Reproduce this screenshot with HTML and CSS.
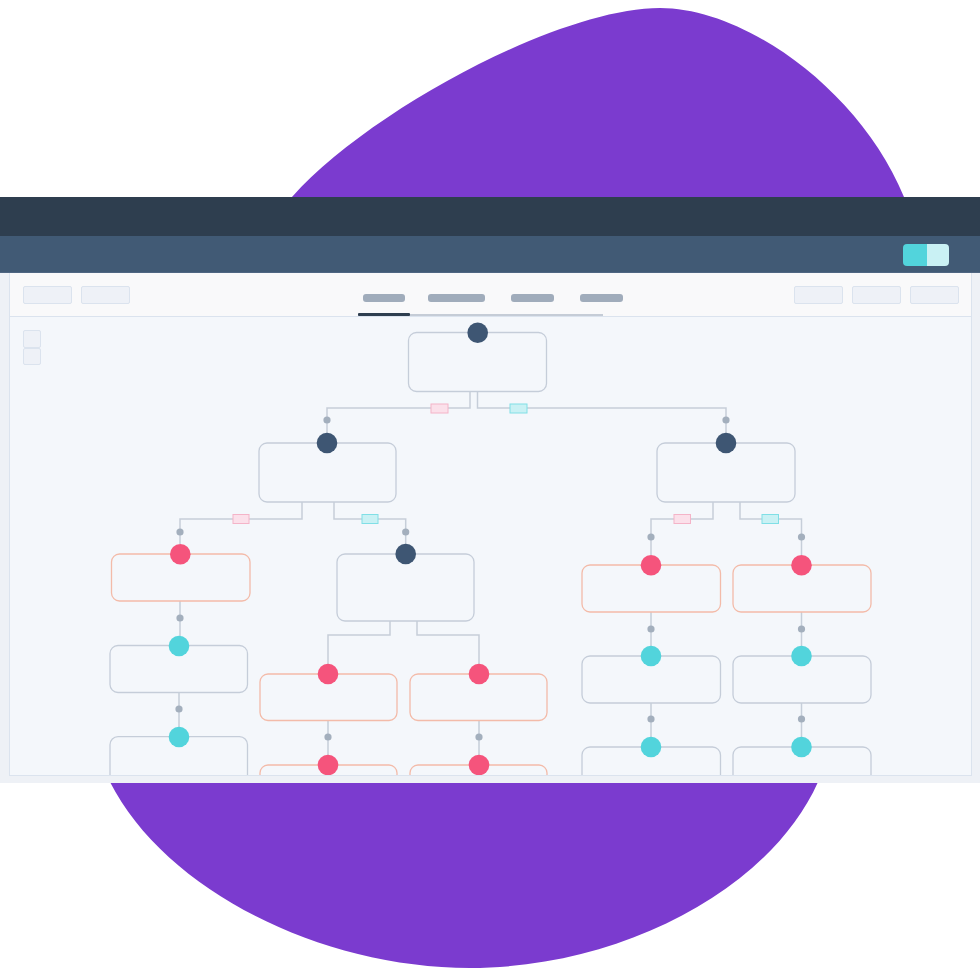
FILE: index.html
```html
<!DOCTYPE html>
<html lang="en">
<head>
    <meta charset="UTF-8">
    <meta name="viewport" content="width=device-width, initial-scale=1.0">
    <title>Flow builder</title>
    <link rel="stylesheet" href="styles.css">
</head>
<body>
    <div class="stage">
        <svg class="blob" width="980" height="980" viewBox="0 0 980 980">
            <path d="M660 8 C745 8 860 90 904 197 L965 430 C960 560 900 680 818 782 C770 890 620 968 470 968 C320 968 165 890 110 782 C60 620 120 400 292 197 C370 110 560 8 660 8 Z" />
        </svg>

        <div class="window">
            <div class="titlebar"></div>
            <div class="menubar">
                <div class="toggle"><span class="on"></span><span class="off"></span></div>
            </div>

            <div class="frame">
                <div class="panel">
                    <div class="toolbar">
                        <div class="btn-group">
                            <span class="btn"></span>
                            <span class="btn"></span>
                        </div>
                        <div class="tabs">
                            <div class="tab-row">
                                <span class="tab w42"></span>
                                <span class="tab w57"></span>
                                <span class="tab w43 wide-gap"></span>
                                <span class="tab w43 wide-gap"></span>
                            </div>
                            <div class="tab-track"><span class="tab-active"></span></div>
                        </div>
                        <div class="btn-group right">
                            <span class="btn"></span>
                            <span class="btn"></span>
                            <span class="btn"></span>
                        </div>
                    </div>

                    <div class="canvas">
                        <div class="zoom">
                            <span></span>
                            <span></span>
                        </div>

                        <svg class="diagram" width="961" height="458" viewBox="10 317 961 458">
                            <!-- connectors -->
                            <g class="links">
                                <path d="M470 392 V408 H327 V433" />
                                <path d="M477.5 392 V408 H726 V433" />
                                <path d="M302 502 V519 H180 V544" />
                                <path d="M334 502 V519 H405.7 V544" />
                                <path d="M713 502 V519 H651 V555" />
                                <path d="M740 502 V519 H801.5 V555" />
                                <path d="M180 601 V636" />
                                <path d="M179 692 V727" />
                                <path d="M390 621 V635 H328 V664" />
                                <path d="M417 621 V635 H479 V664" />
                                <path d="M328 720 V755" />
                                <path d="M479 720 V755" />
                                <path d="M651 612 V646" />
                                <path d="M801.5 612 V646" />
                                <path d="M651 703 V737" />
                                <path d="M801.5 703 V737" />
                            </g>
                            <g class="dots">
                                <circle cx="327" cy="420" r="3.6" />
                                <circle cx="726" cy="420" r="3.6" />
                                <circle cx="180" cy="532" r="3.6" />
                                <circle cx="405.7" cy="532" r="3.6" />
                                <circle cx="651" cy="537" r="3.6" />
                                <circle cx="801.5" cy="537" r="3.6" />
                                <circle cx="180" cy="618" r="3.6" />
                                <circle cx="179" cy="709" r="3.6" />
                                <circle cx="651" cy="629" r="3.6" />
                                <circle cx="801.5" cy="629" r="3.6" />
                                <circle cx="651" cy="719" r="3.6" />
                                <circle cx="801.5" cy="719" r="3.6" />
                                <circle cx="328" cy="737" r="3.6" />
                                <circle cx="479" cy="737" r="3.6" />
                            </g>
                            <g class="tag-no">
                                <rect x="431" y="404" width="17" height="9" />
                                <rect x="233" y="514.5" width="16" height="9" />
                                <rect x="674" y="514.5" width="16.5" height="9" />
                            </g>
                            <g class="tag-yes">
                                <rect x="510" y="404" width="17" height="9" />
                                <rect x="362" y="514.5" width="16" height="9" />
                                <rect x="762" y="514.5" width="16.5" height="9" />
                            </g>

                            <!-- nodes -->
                            <g class="box">
                                <rect x="408.5" y="332.5" width="138" height="59" rx="8" />
                                <rect x="259" y="443" width="137" height="59" rx="8" />
                                <rect x="657" y="443" width="138" height="59" rx="8" />
                                <rect x="337" y="554" width="137" height="67" rx="8" />
                                <rect x="110" y="645.5" width="137.5" height="47" rx="8" />
                                <rect x="110" y="736.7" width="137.5" height="60" rx="8" />
                                <rect x="582" y="656" width="138.5" height="47" rx="8" />
                                <rect x="733" y="656" width="138" height="47" rx="8" />
                                <rect x="582" y="747" width="138.5" height="60" rx="8" />
                                <rect x="733" y="747" width="138" height="60" rx="8" />
                            </g>
                            <g class="box alert">
                                <rect x="111.5" y="554" width="138.5" height="47" rx="8" />
                                <rect x="260" y="674" width="137" height="46.5" rx="8" />
                                <rect x="410" y="674" width="137" height="46.5" rx="8" />
                                <rect x="260" y="765" width="137" height="40" rx="8" />
                                <rect x="410" y="765" width="137" height="40" rx="8" />
                                <rect x="582" y="565" width="138.5" height="47" rx="8" />
                                <rect x="733" y="565" width="138" height="47" rx="8" />
                            </g>

                            <g class="pin dark">
                                <circle cx="477.7" cy="332.7" r="10.3" />
                                <circle cx="327" cy="443" r="10.3" />
                                <circle cx="726" cy="443" r="10.3" />
                                <circle cx="405.7" cy="554" r="10.3" />
                            </g>
                            <g class="pin red">
                                <circle cx="180.3" cy="554.3" r="10.3" />
                                <circle cx="328" cy="674" r="10.3" />
                                <circle cx="479" cy="674" r="10.3" />
                                <circle cx="328" cy="765" r="10.3" />
                                <circle cx="479" cy="765" r="10.3" />
                                <circle cx="651" cy="565.3" r="10.3" />
                                <circle cx="801.5" cy="565.3" r="10.3" />
                            </g>
                            <g class="pin teal">
                                <circle cx="179" cy="646" r="10.3" />
                                <circle cx="179" cy="737" r="10.3" />
                                <circle cx="651" cy="656" r="10.3" />
                                <circle cx="801.5" cy="656" r="10.3" />
                                <circle cx="651" cy="747" r="10.3" />
                                <circle cx="801.5" cy="747" r="10.3" />
                            </g>
                        </svg>
                    </div>
                </div>
            </div>
        </div>
    </div>
</body>
</html>
```

FILE: styles.css
```css
body {
    margin: 0;
    background: #ffffff;
    font-family: "Liberation Sans", Arial, sans-serif;
}
.stage {
    position: relative;
    width: 980px;
    height: 980px;
    overflow: hidden;
}
.blob {
    position: absolute;
    left: 0;
    top: 0;
}
.blob path {
    fill: #7b3bcf;
}
.window {
    position: relative;
    margin-top: 197px;
}
.titlebar {
    height: 39px;
    background: #2e3e4f;
}
.menubar {
    height: 36px;
    background: #415a75;
    border-bottom: 1px solid #4f6682;
    display: flex;
    align-items: flex-start;
    justify-content: flex-end;
    padding-right: 31px;
}
.toggle {
    display: flex;
    margin-top: 8px;
    height: 22px;
    border-radius: 4px;
    overflow: hidden;
}
.toggle .on {
    width: 24px;
    background: #52d4dc;
}
.toggle .off {
    width: 22px;
    background: #c9f1f4;
}
.frame {
    background: #eef1f6;
    padding: 0 8px 7px 9px;
}
.panel {
    border: 1px solid #dbe3ee;
    border-top: none;
}
.toolbar {
    height: 43px;
    display: flex;
    align-items: center;
    padding: 0 12px 0 13px;
    background: #f9f9fa;
    border-bottom: 1px solid #dbe3ee;
}
.btn-group {
    display: flex;
    gap: 9px;
}
.btn-group.right {
    margin-left: auto;
}
.btn {
    width: 47px;
    height: 16px;
    background: #eef1f7;
    border: 1px solid #dbe3ee;
    border-radius: 2px;
}
.tabs {
    align-self: stretch;
    margin-left: 228px;
    display: flex;
    flex-direction: column;
    padding-top: 21px;
    box-sizing: border-box;
}
.tab-row {
    display: flex;
    gap: 23px;
    padding-left: 5px;
}
.tab {
    height: 8px;
    border-radius: 3px;
    background: #a0acbb;
}
.tab.wide-gap {
    margin-left: 3px;
}
.w42 { width: 42px; }
.w57 { width: 57px; }
.w43 { width: 43px; }
.tab-track {
    margin-top: 11px;
    width: 245px;
    height: 3px;
    display: flex;
    align-items: flex-start;
    background: linear-gradient(to bottom, transparent 1px, #c5ccd6 1px);
}
.tab-active {
    width: 52px;
    height: 3px;
    border-radius: 1px;
    background: #2e3e4f;
}
.canvas {
    position: relative;
    height: 458px;
    background: #f4f7fb;
    overflow: hidden;
}
.zoom {
    position: absolute;
    left: 13px;
    top: 13px;
    display: flex;
    flex-direction: column;
}
.zoom span {
    width: 16px;
    height: 15.5px;
    background: #eef1f7;
    border: 1px solid #dbe3ee;
    border-radius: 2px;
}
.diagram {
    display: block;
}
.links path {
    fill: none;
    stroke: #c6ced9;
    stroke-width: 1.5;
}
.dots circle {
    fill: #a3afbd;
}
.tag-no rect {
    fill: #fbe0ea;
    stroke: #f4b4c8;
    stroke-width: 1;
}
.tag-yes rect {
    fill: #c9f1f4;
    stroke: #80dfe6;
    stroke-width: 1;
}
.box rect {
    fill: #f4f7fb;
    stroke: #c5cdd9;
    stroke-width: 1.3;
}
.box.alert rect {
    stroke: #f3bba9;
}
.pin.dark circle {
    fill: #3e5673;
}
.pin.red circle {
    fill: #f5547c;
}
.pin.teal circle {
    fill: #52d4dc;
}
```
